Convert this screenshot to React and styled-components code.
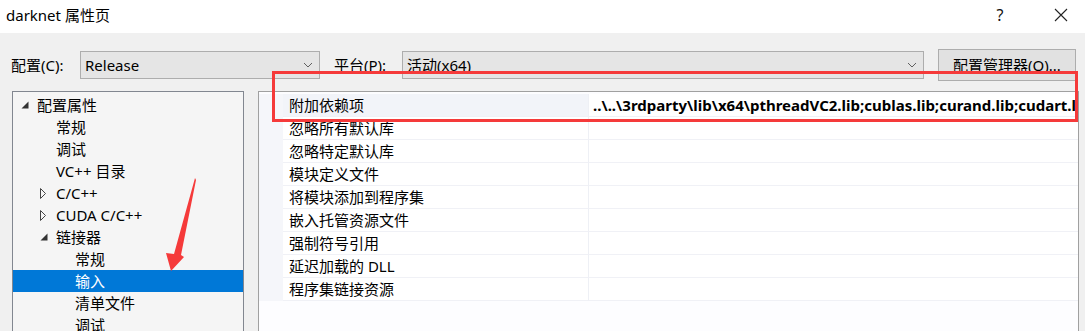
import React from 'react';
import styled, { createGlobalStyle } from 'styled-components';

const GlobalStyle = createGlobalStyle`
  html, body {
    margin: 0;
    padding: 0;
    background: #f0f0f0;
  }
  body {
    font-family: "Noto Sans", "Noto Sans CJK SC", sans-serif;
    font-size: 15px;
    color: #000;
  }
`;

const Window = styled.div`
  position: relative;
  width: 1085px;
  height: 331px;
  overflow: hidden;
  background: #f0f0f0;
  display: flex;
  flex-direction: column;
`;

const TitleBar = styled.div`
  height: 33px;
  flex: none;
  background: #fff;
  display: flex;
  align-items: center;
  padding-left: 6px;
  font-size: 15px;
  line-height: 20px;
  padding-bottom: 3px;
  box-sizing: border-box;
`;

const TitleText = styled.div`
  flex: 1;
`;

const TitleButton = styled.div`
  width: ${(p) => p.$w}px;
  display: flex;
  justify-content: center;
  align-items: center;
  color: #111;
  font-size: 16px;
`;

const ConfigRow = styled.div`
  display: flex;
  align-items: center;
  height: 32px;
  margin-top: 16px;
  padding-left: 11px;
`;

const Label = styled.div`
  width: ${(p) => p.$w}px;
  line-height: 20px;
  white-space: nowrap;
`;

const Combo = styled.div`
  width: ${(p) => p.$w}px;
  height: 28px;
  box-sizing: border-box;
  border: 1px solid #adadad;
  background: #e5e5e5;
  display: flex;
  align-items: center;
  padding-left: 4px;
  padding-right: 6px;
  margin-right: ${(p) => p.$mr || 0}px;
  line-height: 20px;
`;

const ComboText = styled.div`
  flex: 1;
`;

const Button = styled.div`
  width: 138px;
  height: 32px;
  box-sizing: border-box;
  border: 1px solid #adadad;
  background: #e1e1e1;
  display: flex;
  align-items: center;
  justify-content: center;
  line-height: 20px;
`;

const Panels = styled.div`
  display: flex;
  margin-top: 10px;
  padding-left: 12px;
  flex: 1;
`;

const Tree = styled.div`
  width: 232px;
  box-sizing: border-box;
  border: 1px solid #828790;
  border-bottom: none;
  background: #f5f5f5;
  padding-top: 2px;
  margin-right: 14px;
`;

const TreeRow = styled.div`
  height: 22px;
  display: flex;
  align-items: center;
  padding-left: ${(p) => 8 + p.$level * 19}px;
  background: ${(p) => (p.$selected ? '#0078d7' : 'transparent')};
  color: ${(p) => (p.$selected ? '#fff' : '#000')};
  line-height: 20px;
  white-space: nowrap;
`;

const Toggle = styled.div`
  width: 16px;
  height: 22px;
  flex: none;
  display: flex;
  align-items: center;
`;

const Grid = styled.div`
  width: 821px;
  box-sizing: border-box;
  border: 1px solid #a0a0a0;
  border-bottom: none;
  background: #fdfdff;
  padding-top: 2px;
  display: flex;
  flex-direction: column;
`;

const GridRow = styled.div`
  display: flex;
  height: 23px;
  line-height: 20px;
`;

const Gutter = styled.div`
  width: 24px;
  flex: none;
  background: #f5f6fa;
`;

const NameCell = styled.div`
  width: 299px;
  flex: none;
  padding-left: 6px;
  display: flex;
  align-items: center;
  background: ${(p) => (p.$active ? '#f2f4f9' : '#fff')};
  border-bottom: 1px solid #f0f1f6;
  border-right: 1px solid #eef0f5;
  white-space: nowrap;
`;

const ValueCell = styled.div`
  flex: 1;
  min-width: 0;
  padding-left: 4px;
  display: flex;
  align-items: center;
  background: #fff;
  border-bottom: 1px solid #f0f1f6;
  font-weight: ${(p) => (p.$bold ? 700 : 400)};
  white-space: nowrap;
  overflow: hidden;
`;

const Highlight = styled.div`
  position: absolute;
  left: 272px;
  top: 71px;
  width: 806px;
  height: 51px;
  box-sizing: border-box;
  border: 3px solid #f53a3a;
  pointer-events: none;
`;

const Arrow = styled.svg`
  position: absolute;
  left: 160px;
  top: 174px;
`;

const Chevron = () => (
  <svg width="10" height="6" viewBox="0 0 10 6">
    <polyline points="1,1 5,5 9,1" fill="none" stroke="#606060" strokeWidth="1" />
  </svg>
);

const Expanded = () => (
  <svg width="8" height="8" viewBox="0 0 8 8">
    <polygon points="7.5,0.5 7.5,7.5 0.5,7.5" fill="#333" />
  </svg>
);

const Collapsed = () => (
  <svg width="7" height="11" viewBox="0 0 7 11">
    <polygon points="0.5,0.5 5.5,5.5 0.5,10.5" fill="none" stroke="#444" strokeWidth="1" />
  </svg>
);

const treeItems = [
  { label: '配置属性', level: 0, toggle: 'open' },
  { label: '常规', level: 1 },
  { label: '调试', level: 1 },
  { label: 'VC++ 目录', level: 1 },
  { label: 'C/C++', level: 1, toggle: 'closed' },
  { label: 'CUDA C/C++', level: 1, toggle: 'closed' },
  { label: '链接器', level: 1, toggle: 'open' },
  { label: '常规', level: 2 },
  { label: '输入', level: 2, selected: true },
  { label: '清单文件', level: 2 },
  { label: '调试', level: 2 },
];

const props = [
  {
    name: '附加依赖项',
    value:
      '..\\..\\3rdparty\\lib\\x64\\pthreadVC2.lib;cublas.lib;curand.lib;cudart.lib;%(AdditionalDependencies)',
    active: true,
  },
  { name: '忽略所有默认库' },
  { name: '忽略特定默认库' },
  { name: '模块定义文件' },
  { name: '将模块添加到程序集' },
  { name: '嵌入托管资源文件' },
  { name: '强制符号引用' },
  { name: '延迟加载的 DLL' },
  { name: '程序集链接资源' },
];

export default function App() {
  return (
    <Window>
      <GlobalStyle />
      <TitleBar>
        <TitleText>darknet 属性页</TitleText>
        <TitleButton $w={74}>?</TitleButton>
        <TitleButton $w={48}>
          <svg width="14" height="14" viewBox="0 0 14 14">
            <path d="M1 1 L13 13 M13 1 L1 13" stroke="#222" strokeWidth="1.1" />
          </svg>
        </TitleButton>
      </TitleBar>

      <ConfigRow>
        <Label $w={69}>配置(C):</Label>
        <Combo $w={240} $mr={14}>
          <ComboText>Release</ComboText>
          <Chevron />
        </Combo>
        <Label $w={68}>平台(P):</Label>
        <Combo $w={522} $mr={14}>
          <ComboText>活动(x64)</ComboText>
          <Chevron />
        </Combo>
        <Button>配置管理器(O)...</Button>
      </ConfigRow>

      <Panels>
        <Tree>
          {treeItems.map((it, i) => (
            <TreeRow key={i} $level={it.level} $selected={it.selected}>
              <Toggle>
                {it.toggle === 'open' && <Expanded />}
                {it.toggle === 'closed' && <Collapsed />}
              </Toggle>
              {it.label}
            </TreeRow>
          ))}
        </Tree>
        <Grid>
          {props.map((p, i) => (
            <GridRow key={i}>
              <Gutter />
              <NameCell $active={p.active}>{p.name}</NameCell>
              <ValueCell $bold={!!p.value}>{p.value || ''}</ValueCell>
            </GridRow>
          ))}
          <GridRow style={{ flex: 1 }}>
            <Gutter style={{ background: '#fdfdff' }} />
          </GridRow>
        </Grid>
      </Panels>

      <Highlight />
      <Arrow width="40" height="100" viewBox="0 0 40 100">
        <path
          d="M35 4 L36 6 L21 81 L24 83 L11 97 L6 79 L14 80 Z"
          fill="#f53a3a"
        />
      </Arrow>
    </Window>
  );
}
